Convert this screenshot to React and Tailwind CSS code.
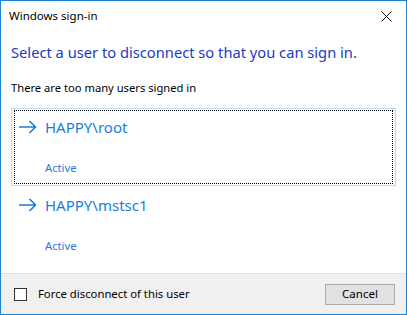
export default function App() {
    const users = [
        { name: "HAPPY\\root", status: "Active", focused: true },
        { name: "HAPPY\\mstsc1", status: "Active", focused: false },
    ]

    return (
        <div className="w-[407px] h-[315px] flex flex-col bg-white border border-[#1883d7] text-black font-['Noto_Sans',sans-serif]">
            {/* title bar */}
            <div className="h-[30px] flex items-center justify-between pl-[8px] pr-[14px] shrink-0">
                <span className="text-[11.5px]">Windows sign-in</span>
                <svg width="11" height="11" viewBox="0 0 11 11" className="mt-[1px]">
                    <path d="M0.5 0.5L10.5 10.5M10.5 0.5L0.5 10.5" stroke="#111" strokeWidth="1" />
                </svg>
            </div>

            {/* body */}
            <div className="flex-1 px-[10px]">
                <h1 className="mt-[10px] text-[14.7px] text-[#1a3cbf] leading-[22px]">
                    Select a user to disconnect so that you can sign in.
                </h1>
                <p className="mt-[17px] text-[11.2px] leading-[16px]">There are too many users signed in</p>

                <div className="mt-[12px] flex flex-col">
                    {users.map((u) => (
                        <div
                            key={u.name}
                            className={
                                u.focused
                                    ? "h-[78px] border border-[#bcdcf4] px-[2px] py-[1px]"
                                    : "h-[78px] border border-transparent px-[2px] py-[1px]"
                            }
                        >
                            <div
                                className={
                                    u.focused
                                        ? "h-full border border-dotted border-black flex flex-col pl-[4px] pt-[5px]"
                                        : "h-full border border-dotted border-transparent flex flex-col pl-[4px] pt-[5px]"
                                }
                            >
                                <div className="flex items-center gap-[8px]">
                                    <svg width="18" height="14" viewBox="0 0 18 14">
                                        <path d="M0 7H16.5M10.5 1L16.5 7L10.5 13" stroke="#1a7ddb" strokeWidth="1.6" fill="none" />
                                    </svg>
                                    <span className="text-[15px] text-[#1a7ddb] leading-[22px]">{u.name}</span>
                                </div>
                                <span className="mt-[22px] ml-[26px] text-[11.2px] text-[#1a7ddb] leading-[16px]">{u.status}</span>
                            </div>
                        </div>
                    ))}
                </div>
            </div>

            {/* footer */}
            <div className="h-[41px] shrink-0 bg-[#f0f0f0] border-t border-[#dfdfdf] flex items-center justify-between pl-[13px] pr-[11px]">
                <label className="flex items-center gap-[11px] text-[11.3px]">
                    <span className="w-[13px] h-[13px] border border-[#333] bg-white"></span>
                    Force disconnect of this user
                </label>
                <button className="w-[70px] h-[21px] bg-[#e1e1e1] border border-[#adadad] text-[11.5px] leading-none">
                    Cancel
                </button>
            </div>
        </div>
    )
}
